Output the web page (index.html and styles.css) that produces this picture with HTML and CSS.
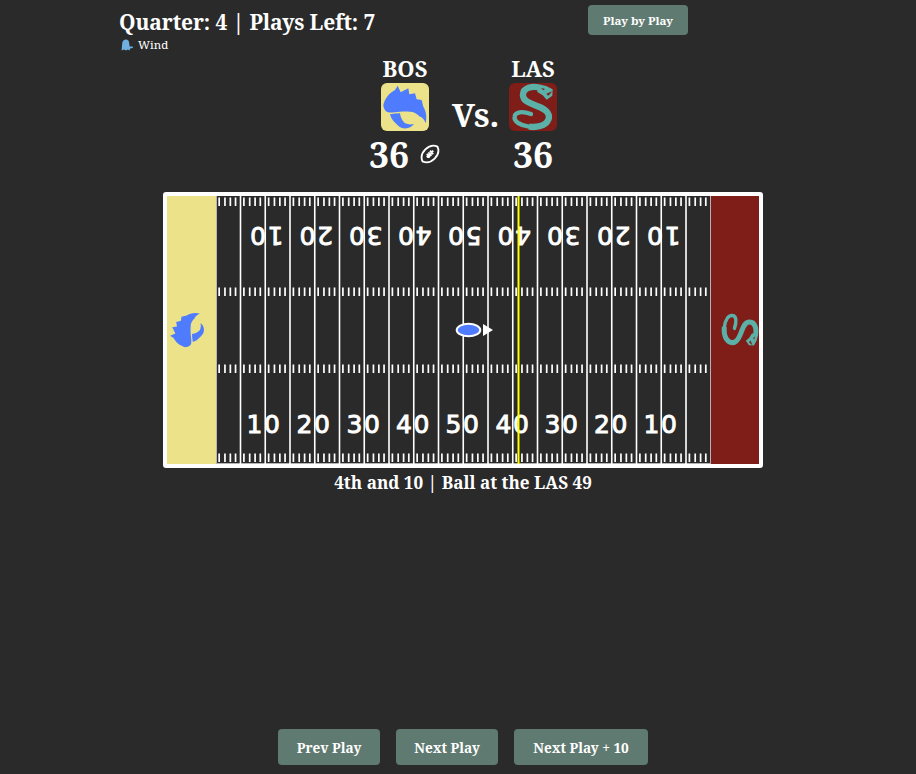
FILE: index.html
```html
<!DOCTYPE html>
<html lang="en">
<head>
<meta charset="utf-8">
<title>Game</title>
<link rel="stylesheet" href="styles.css">
</head>
<body>
<svg class="defs" width="0" height="0" aria-hidden="true">
  <defs>
    <symbol id="logo-bos" viewBox="0 0 144 144">
      <path fill="#4f7cff" d="M7 66C11 50 22 31 42 21L50 8L59 28L82 16L85 34L102 31L107 49L122 51L127 71C134 82 139 100 134 121C130 108 122 102 117 101C106 90 98 86 87 86C76 85 66 85 57 86C44 87 32 90 22 88C14 87 8 78 7 66Z"/>
      <path fill="#4f7cff" d="M27 94C38 92 48 91 57 91C58 102 64 114 72 121C81 125 90 125 99 123C93 130 86 135 77 136C66 137 58 134 52 128C44 122 37 113 35 111C31 106 29 100 27 94Z"/>
    </symbol>
    <symbol id="logo-las" viewBox="0 0 144 144">
      <path fill="none" stroke="#5bb0a8" stroke-width="19" d="M100 16C70 6 40 14 42 38C44 58 70 62 92 72C115 82 124 96 118 110C110 130 80 134 60 131"/>
      <path fill="none" stroke="#5bb0a8" stroke-width="13" stroke-linecap="round" d="M60 131C35 128 14 116 17 100C19 86 40 84 66 93"/>
      <path fill="#5bb0a8" d="M85 6L110 8L131 19L130 38L113 50L101 37L85 27Z"/>
      <path fill="#7f1d18" d="M96 15L108 18L103 22ZM130 25L112 32L118 38Z"/>
    </symbol>
    <g id="ticks" fill="#fff">
      <rect x="2.3" width="1.7" height="8.500"/>
      <rect x="8.100" width="1.7" height="8.500"/>
      <rect x="13.5" width="1.7" height="8.500"/>
      <rect x="18.7" width="1.7" height="8.500"/>
    </g>
    <g id="yard">
      <use href="#ticks" y="1.5"/>
      <use href="#ticks" y="91.5"/>
      <use href="#ticks" y="168.500"/>
      <use href="#ticks" y="257.500"/>
    </g>
    <g id="half">
      <use href="#yard"/>
      <use href="#yard" x="24.75"/>
      <use href="#yard" x="49.5"/>
      <use href="#yard" x="74.25"/>
      <use href="#yard" x="99"/>
    </g>
  </defs>
</svg>
<div class="page">
  <header class="topbar">
    <div class="status">
      <h1 class="quarter">Quarter: 4 | Plays Left: 7</h1>
      <div class="weather">
        <svg class="wind" viewBox="0 0 12 12"><path fill="#6fb0e0" d="M.6 11.4L1.2 4.5C1.4 1.6 3 .4 5 .4C7 .4 8 1.8 8.2 4L8.6 7.6L11.8 7.4V9L9 9.4L8.8 11.4L6.8 10.6L5 11.4L3 10.6Z"/></svg>
        <span>Wind</span>
      </div>
    </div>
    <button class="btn btn-small">Play by Play</button>
  </header>

  <section class="scoreboard">
    <div class="team">
      <div class="abbr">BOS</div>
      <svg class="tile tile-bos"><use href="#logo-bos"/></svg>
      <div class="score">36
        <svg class="possession" viewBox="0 0 24 24"><g fill="none" stroke="#fff" stroke-width="2" transform="rotate(-45 12 12)"><path d="M.5 12C4 2.500 20 2.500 23.500 12C20 21.500 4 21.500 .5 12Z"/><path d="M7 12h10M9.500 9.500v5M12 9.500v5M14.500 9.500v5"/></g></svg>
      </div>
    </div>
    <div class="versus">Vs.</div>
    <div class="team">
      <div class="abbr">LAS</div>
      <svg class="tile tile-las"><use href="#logo-las"/></svg>
      <div class="score">36</div>
    </div>
  </section>

  <section class="field">
    <div class="endzone endzone-home"><svg class="ez-logo ez-left"><use href="#logo-bos"/></svg></div>
    <svg class="yards" viewBox="0 0 495 268">
      <use href="#half"/>
      <use href="#half" x="123.75"/>
      <use href="#half" x="247.5"/>
      <use href="#half" x="371.25"/>
      <path class="edges" d="M.5 0V268M494.500 0V268M0 267.500H495"/>
      <g class="lines">
        <path d="M24.5 0V268M49.25 0V268M74 0V268M98.75 0V268M123.5 0V268M148.25 0V268M173 0V268M197.75 0V268M222.5 0V268M247.25 0V268M272 0V268M296.75 0V268M321.5 0V268M346.25 0V268M371 0V268M395.75 0V268M420.5 0V268M445.25 0V268M470 0V268"/>
      </g>
      <g class="nums">
        <text x="48" y="236.800">10</text><text x="98" y="236.800">20</text><text x="148" y="236.800">30</text><text x="197.500" y="236.800">40</text><text x="247" y="236.800">50</text><text x="297" y="236.800">40</text><text x="346" y="236.800">30</text><text x="395.500" y="236.800">20</text><text x="445" y="236.800">10</text>
      </g>
      <g class="nums" transform="rotate(180 247.5 134)">
        <text x="48" y="237.500">10</text><text x="98" y="237.500">20</text><text x="148" y="237.500">30</text><text x="197.500" y="237.500">40</text><text x="247" y="237.500">50</text><text x="297" y="237.500">40</text><text x="346" y="237.500">30</text><text x="395.500" y="237.500">20</text><text x="445" y="237.500">10</text>
      </g>
      <path class="first-down" d="M302.5 0V268"/>
      <ellipse class="ball" cx="252.5" cy="134" rx="11.8" ry="6.3"/>
      <path class="arrow" d="M267 128L277 134L267 140Z"/>
    </svg>
    <div class="endzone endzone-away"><svg class="ez-logo ez-right"><use href="#logo-las"/></svg></div>
  </section>
  <p class="situation">4th and 10 | Ball at the LAS 49</p>

  <footer class="controls">
    <button class="btn">Prev Play</button>
    <button class="btn">Next Play</button>
    <button class="btn btn-wide">Next Play + 10</button>
  </footer>
</div>
</body>
</html>
```
FILE: styles.css
```css
* { box-sizing: border-box; }
html, body { margin: 0; height: 100%; }
body {
  background: #2a2a2a;
  color: #fff;
  font-family: "Noto Serif", "DejaVu Serif", "Liberation Serif", serif;
}
.defs { position: absolute; }
.page {
  height: 774px;
  display: flex;
  flex-direction: column;
  overflow: hidden;
}
.topbar {
  display: flex;
  justify-content: space-between;
  align-items: flex-start;
  padding: 5px 228px 0 119px;
  height: 57px;
}
.quarter { margin: 4px 0 0; font-size: 21px; line-height: 26px; font-weight: 700; letter-spacing: -0.12px; }
.weather { display: flex; align-items: center; gap: 5px; margin-top: 3px; font-size: 11.5px; line-height: 14px; margin-left: 2px; }
.wind { width: 12px; height: 12px; }
.btn {
  border: 0;
  border-radius: 4px;
  background: #5f7a70;
  color: #fff;
  font-family: inherit;
  font-weight: 700;
  font-size: 13.6px;
  height: 36px;
  width: 102px;
  padding: 0;
}
.btn-wide { width: 134px; }
.btn-small { font-size: 11.6px; height: 30px; width: 100px; }
.scoreboard {
  display: flex;
  justify-content: center;
  padding-left: 22px;
  height: 135px;
}
.team { width: 72px; display: flex; flex-direction: column; align-items: center; }
.abbr { font-size: 22px; line-height: 22px; margin-bottom: 4px; font-weight: 700; }
.tile { width: 48px; height: 48px; border-radius: 6px; }
.tile-bos { background: #ebe28a; }
.tile-las { background: #7f1d18; }
.score { display: flex; align-items: center; gap: 10px; margin-top: 3px; font-size: 35.500px; line-height: 40px; font-weight: 700; }
.possession { width: 22px; height: 22px; }
.versus { width: 56px; padding-top: 38px; padding-left: 11px; white-space: nowrap; font-size: 33px; line-height: 40px; font-weight: 700; }
.field {
  align-self: flex-start;
  margin-left: 163px;
  width: 600px;
  height: 276px;
  border: 4px solid #fff;
  border-radius: 3px;
  display: flex;
}
.endzone { width: 48.5px; display: flex; align-items: center; justify-content: center; flex: none; }
.endzone-home { background: #ebe28a; }
.endzone-away { background: #7f1d18; }
.yards { width: 495px; height: 268px; flex: none; }
.edges { stroke: #b5b5b5; stroke-width: 1; fill: none; }
.lines path { stroke: #fff; stroke-width: 1.6; fill: none; }
.nums text { fill: #fff; stroke: #fff; stroke-width: 0.9; font-family: "DejaVu Sans", sans-serif; font-size: 25px; text-anchor: middle; letter-spacing: 1.5px; }
.first-down { stroke: #ffff00; stroke-width: 2; fill: none; }
.ball { fill: #4f7cff; stroke: #fff; stroke-width: 2; }
.arrow { fill: #fff; }
.ez-logo { width: 38px; height: 38px; }
.ez-left { transform: translateX(-4px) rotate(-90deg); }
.ez-right { transform: translateX(5px) rotate(90deg); }
.situation { margin: 4px 0 0; align-self: flex-start; width: 926px; text-align: center; font-size: 17.100px; line-height: 22px; font-weight: 700; }
.controls {
  margin-top: auto;
  padding: 0 0 9px 278px;
  display: flex;
  gap: 16px;
}
```
